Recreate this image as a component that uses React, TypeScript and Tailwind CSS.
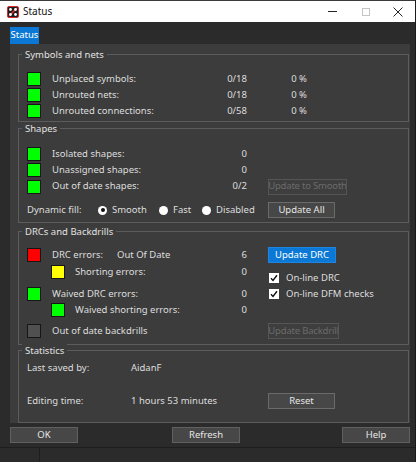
import type { ReactNode } from 'react';

const Square = ({ color }: { color: string }) => (
  <div className={`w-[14px] h-[14px] border border-[#161616] ${color}`} />
);

const Group = ({ title, className, children }: { title: string; className: string; children: ReactNode }) => (
  <div className={`ml-[8px] w-[391px] border border-[#5c5c5c] flex flex-col ${className}`}>
    <div className="-mt-[7px] ml-[3px] px-[3px] w-fit h-[13px] leading-[13px] bg-[#3c3c3c] text-[#e2e2e2]">
      {title}
    </div>
    {children}
  </div>
);

const Button = ({ children, className = '', disabled = false }: { children: ReactNode; className?: string; disabled?: boolean }) => (
  <div
    className={`h-[16px] flex items-center justify-center border whitespace-nowrap overflow-hidden ${
      disabled
        ? 'border-[#555555] bg-[#3e3e3e] text-[#6b6b6b] tracking-[-0.2px]'
        : 'border-[#6a6a6a] bg-[#474747] text-[#e6e6e6]'
    } ${className}`}
  >
    {children}
  </div>
);

const Radio = ({ checked }: { checked?: boolean }) => (
  <div className="w-[9px] h-[9px] rounded-full bg-white flex items-center justify-center">
    {checked && <div className="w-[4px] h-[4px] rounded-full bg-[#111]" />}
  </div>
);

const Checkbox = () => (
  <div className="w-[10px] h-[10px] bg-white flex items-center justify-center">
    <svg width="8" height="8" viewBox="0 0 8 8">
      <path d="M1 4.2 L3 6.4 L7 1.2" stroke="#111" strokeWidth="1.4" fill="none" />
    </svg>
  </div>
);

// one status line: indicator, label, right-aligned count
const StatusRow = ({
  color,
  label,
  value,
  indent = false,
  className = '',
  children,
}: {
  color: string;
  label: ReactNode;
  value: string;
  indent?: boolean;
  className?: string;
  children?: ReactNode;
}) => (
  <div className={`flex items-center h-[16px] whitespace-nowrap ${className}`}>
    <div className={`flex ${indent ? 'w-[48px] pl-[24px]' : 'w-[25px]'}`}>
      <Square color={color} />
    </div>
    <div className={`${indent ? 'w-[147px]' : 'w-[170px]'} flex`}>{label}</div>
    <div className="w-[25px] text-right">{value}</div>
    {children}
  </div>
);

const AppIcon = () => (
  <svg width="12" height="12" viewBox="0 0 12 12">
    <rect x="0.5" y="0.5" width="11" height="11" rx="1.5" fill="#1d1d1d" stroke="#d42a2a" />
    <line x1="2" y1="10" x2="10" y2="2" stroke="#e02828" strokeWidth="1.6" />
    <circle cx="3.5" cy="3.5" r="1.4" fill="#fff" />
    <circle cx="8.5" cy="3.5" r="1.4" fill="#fff" />
    <circle cx="3.5" cy="8.5" r="1.4" fill="#fff" />
    <circle cx="8.5" cy="8.5" r="1.4" fill="#fff" />
  </svg>
);

export default function App() {
  return (
    <div className="w-[416px] h-[462px] bg-[#2b2b2b] border-r border-[#1a1a1a] flex flex-col font-['Noto_Sans',sans-serif] text-[9.5px] text-[#dedede] overflow-hidden">
      {/* title bar */}
      <div className="border-t border-[#3a3a3a] h-[22px] bg-white flex items-center text-[#111] shrink-0">
        <div className="ml-[7px]">
          <AppIcon />
        </div>
        <span className="ml-[4px] text-[10px]">Status</span>
        <div className="ml-auto flex items-center">
          <div className="w-[9px] h-px bg-[#222]" />
          <div className="ml-[25px] w-[8px] h-[8px] border border-[#c4c4c4]" />
          <svg className="ml-[23px] mr-[12px]" width="10" height="10" viewBox="0 0 10 10">
            <path d="M0.5 0.5 L9.5 9.5 M9.5 0.5 L0.5 9.5" stroke="#222" strokeWidth="1" />
          </svg>
        </div>
      </div>

      {/* tab */}
      <div className="mt-[5px] ml-[10px] w-[29px] h-[17px] bg-[#0a78d4] text-white flex items-center justify-center shrink-0">
        Status
      </div>

      {/* tab page */}
      <div className="ml-[10px] w-[400px] h-[379px] bg-[#3c3c3c] pt-[10px] flex flex-col shrink-0">
        <Group title="Symbols and nets" className="h-[68px]">
          <div className="mt-[10px] pl-[8px] flex flex-col">
            <StatusRow color="bg-[#00ff00]" label="Unplaced symbols:" value="0/18">
              <div className="w-[60px] text-right">0 %</div>
            </StatusRow>
            <StatusRow color="bg-[#00ff00]" label="Unrouted nets:" value="0/18">
              <div className="w-[60px] text-right">0 %</div>
            </StatusRow>
            <StatusRow color="bg-[#00ff00]" label="Unrouted connections:" value="0/58">
              <div className="w-[60px] text-right">0 %</div>
            </StatusRow>
          </div>
        </Group>

        <Group title="Shapes" className="mt-[6px] h-[95px]">
          <div className="mt-[11px] pl-[8px] flex flex-col">
            <StatusRow color="bg-[#00ff00]" label="Isolated shapes:" value="0" />
            <StatusRow color="bg-[#00ff00]" label="Unassigned shapes:" value="0" />
            <StatusRow color="bg-[#00ff00]" label="Out of date shapes:" value="0/2" className="h-[17px]">
              <Button disabled className="ml-[21px] w-[79px]">
                Update to Smooth
              </Button>
            </StatusRow>
            <div className="mt-[7px] flex items-center h-[16px] whitespace-nowrap">
              <div className="w-[71px]">Dynamic fill:</div>
              <div className="w-[61px] flex items-center">
                <Radio checked />
                <span className="ml-[5px]">Smooth</span>
              </div>
              <div className="w-[43px] flex items-center">
                <Radio />
                <span className="ml-[5px]">Fast</span>
              </div>
              <div className="w-[66px] flex items-center">
                <Radio />
                <span className="ml-[5px]">Disabled</span>
              </div>
              <Button className="w-[67px]">Update All</Button>
            </div>
          </div>
        </Group>

        <Group title="DRCs and Backdrills" className="mt-[8px] h-[114px]">
          <div className="mt-[9px] pl-[8px] flex whitespace-nowrap">
            <div className="w-[241px] flex flex-col">
              <StatusRow
                color="bg-[#ff0000]"
                label={
                  <>
                    <span className="w-[65px]">DRC errors:</span>
                    <span>Out Of Date</span>
                  </>
                }
                value="6"
              />
              <StatusRow color="bg-[#ffff00]" label="Shorting errors:" value="0" indent className="mt-[1px]" />
              <StatusRow color="bg-[#00ff00]" label="Waived DRC errors:" value="0" className="mt-[6px]" />
              <StatusRow color="bg-[#00ff00]" label="Waived shorting errors:" value="0" indent />
              <StatusRow color="bg-[#505050]" label="Out of date backdrills" value="" className="mt-[5px]" />
            </div>
            <div className="flex flex-col">
              <div className="h-[16px] w-[68px] bg-[#0a78d4] border border-[#1c86e0] text-white flex items-center justify-center">
                Update DRC
              </div>
              <div className="mt-[7px] h-[16px] flex items-center pl-[1px]">
                <Checkbox />
                <span className="ml-[7px]">On-line DRC</span>
              </div>
              <div className="h-[16px] flex items-center pl-[1px]">
                <Checkbox />
                <span className="ml-[7px]">On-line DFM checks</span>
              </div>
              <Button disabled className="mt-[21px] w-[71px]">
                Update Backdrill
              </Button>
            </div>
          </div>
        </Group>

        <Group title="Statistics" className="mt-[5px] h-[73px]">
          <div className="mt-[3px] pl-[8px] flex flex-col whitespace-nowrap">
            <div className="flex items-center h-[16px]">
              <div className="w-[104px]">Last saved by:</div>
              <div>AidanF</div>
            </div>
            <div className="mt-[17px] flex items-center h-[16px]">
              <div className="w-[104px]">Editing time:</div>
              <div className="w-[137px]">1 hours 53 minutes</div>
              <Button className="w-[67px]">Reset</Button>
            </div>
          </div>
        </Group>
      </div>

      {/* dialog buttons */}
      <div className="mt-[4px] ml-[10px] w-[400px] flex shrink-0">
        <Button className="w-[68px] bg-[#444444] border-[#606060]">OK</Button>
        <Button className="ml-[94px] w-[68px] bg-[#444444] border-[#606060]">Refresh</Button>
        <Button className="ml-auto w-[68px] bg-[#444444] border-[#606060]">Help</Button>
      </div>

      {/* status strip */}
      <div className="mt-[4px] flex-1 border-t border-[#1e1e1e] flex">
        <div className="w-[40px] border-r border-[#1e1e1e]" />
      </div>
    </div>
  );
}
